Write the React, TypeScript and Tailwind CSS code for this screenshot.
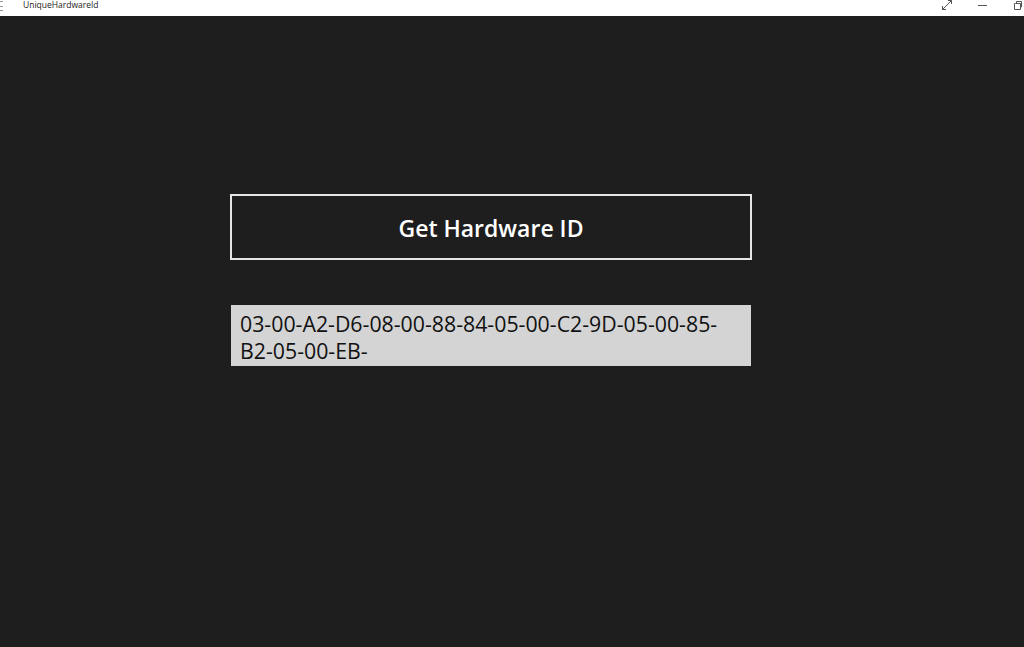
const App = () => {
  return (
    <div className="w-[1024px] h-[647px] flex flex-col bg-[#1e1e1e] overflow-hidden" style={{ fontFamily: "'Open Sans', 'Noto Sans', sans-serif" }}>
      {/* title bar */}
      <div className="h-4 bg-white flex items-center text-[#222] shrink-0 relative">
        <span className="absolute left-0 top-[1px] w-[3px] h-[10px] flex flex-col justify-between">
          <span className="h-px bg-[#999]" />
          <span className="h-px bg-[#999]" />
          <span className="h-px bg-[#999]" />
        </span>
        <span className="ml-[23px] mb-[6px] text-[8.5px] leading-none">UniqueHardwareId</span>
        <div className="ml-auto flex items-center h-full pb-[6px]">
          <svg width="12" height="12" viewBox="0 0 12 12" className="mr-[25px]" fill="none" stroke="#555" strokeWidth="1">
            <path d="M1.5 10.5 L10.5 1.5 M1.5 10.5 L1.5 7 M1.5 10.5 L5 10.5 M10.5 1.5 L7 1.5 M10.5 1.5 L10.5 5" />
          </svg>
          <svg width="10" height="10" viewBox="0 0 10 10" className="mr-[25px]" stroke="#555" strokeWidth="1">
            <path d="M0 5.5 H9" />
          </svg>
          <svg width="10" height="10" viewBox="0 0 10 10" className="mr-[1px]" fill="none" stroke="#555" strokeWidth="1">
            <path d="M2.5 3.5 H7.5 V9.5 H1.5 V3.5 Z M3.5 3.5 V1.5 H8.5 V7 H7.5" />
          </svg>
        </div>
      </div>

      <div className="flex flex-col pl-[230px] pt-[178px]">
        <button className="w-[522px] h-[66px] border-2 border-[#e6e6e6] text-white text-[23px] font-semibold flex items-center justify-center pt-[2px]">
          Get Hardware ID
        </button>
        <div className="mt-[45px] ml-px w-[520px] h-[61px] bg-[#d4d4d4] text-[#111] text-[21.3px] leading-[27px] pl-[9px] pt-[5px]">
          <span className="block">03-00-A2-D6-08-00-88-84-05-00-C2-9D-05-00-85-</span>
          <span className="block">B2-05-00-EB-</span>
        </div>
      </div>
    </div>
  );
};

export default App;
